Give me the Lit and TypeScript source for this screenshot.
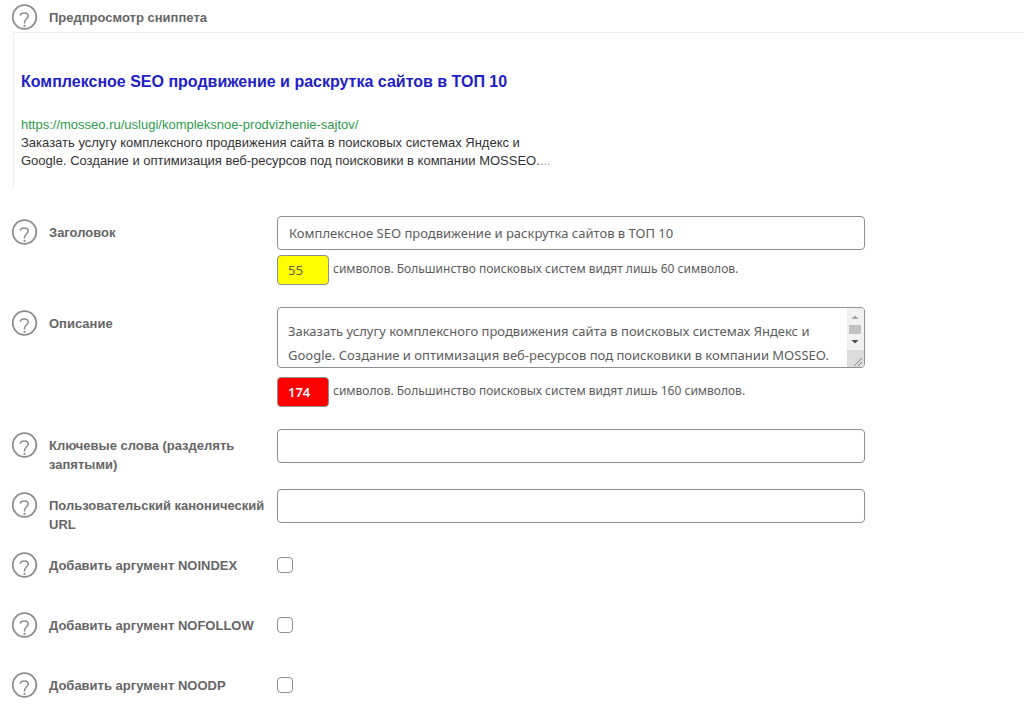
import { LitElement, html, css } from "lit";
import { customElement, property } from "lit/decorators.js";

@customElement("help-button")
class HelpButton extends LitElement {
  static styles = css`
    :host {
      display: block;
      height: 26px;
    }
    .help {
      display: block;
      width: 26px;
      height: 26px;
      padding: 0;
      border: 0;
      background: none;
      cursor: pointer;
    }
    .icon {
      display: block;
      width: 26px;
      height: 26px;
    }
  `;

  render() {
    return html`
      <button class="help" type="button" aria-label="Справка">
        <svg class="icon" viewBox="0 0 26 26" fill="none">
          <circle cx="12.500" cy="13" r="11.8" stroke="#8c8c8c" stroke-width="1.8" />
          <path
            d="M8.300 11.800C8.300 9.800 10 8.900 12.200 8.900C14.600 8.900 16.200 10.100 16.200 12.100C16.200 14.900 12.500 15.200 12.500 18.300V19.500"
            stroke="#8c8c8c"
            stroke-width="1.5"
          />
          <circle cx="12.500" cy="21.900" r="1.1" fill="#8c8c8c" />
        </svg>
      </button>
    `;
  }
}

@customElement("app-root")
class AppRoot extends LitElement {
  @property() heading = "Комплексное SEO продвижение и раскрутка сайтов в ТОП 10";
  @property() description =
    "Заказать услугу комплексного продвижения сайта в поисковых системах Яндекс и Google. Создание и оптимизация веб-ресурсов под поисковики в компании MOSSEO.";

  static styles = css`
    :host {
      display: block;
      box-sizing: border-box;
      padding: 4px 0 0 12px;
      background: #fff;
      color: #666;
      font: 13px/19px "Liberation Sans", Arial, sans-serif;
    }
    * {
      box-sizing: border-box;
    }
    .top {
      display: flex;
      align-items: center;
      gap: 11px;
    }
    .label {
      font-weight: 700;
    }
    .preview {
      margin: 2px 0 28px 1px;
      padding: 38px 7px 18px;
      border-top: 1px solid #eee;
      border-left: 1px solid #eee;
      color: #333;
      line-height: 18px;
    }
    .title {
      display: block;
      margin-bottom: 23px;
      color: #1e22c5;
      font-size: 16px;
      line-height: 22px;
      font-weight: 700;
      text-decoration: none;
    }
    .url {
      color: #2d9b4b;
      line-height: 18px;
    }
    .text {
      margin: 0;
      max-width: 536px;
    }
    .more {
      color: #999;
    }
    .row {
      display: grid;
      grid-template-columns: 26px 217px minmax(0, 588px);
      column-gap: 11px;
      align-items: start;
      min-height: 60px;
      padding-bottom: 22px;
    }
    .short {
      padding-bottom: 0;
    }
    .row help-button {
      margin-top: 3px;
    }
    .row .label {
      padding-top: 7px;
    }
    .input,
    .area,
    .count {
      border: 1px solid #8c8f94;
      border-radius: 4px;
      background: #fff;
      color: #5c5c5c;
      font: 13px/24px "Noto Sans", "Open Sans", sans-serif;
    }
    .input {
      display: block;
      width: 100%;
      height: 34px;
      padding: 0 11px;
    }
    .area {
      display: flex;
      height: 61px;
      overflow: hidden;
    }
    .textarea {
      flex: 1;
      min-width: 0;
      padding: 11px 0 0 10px;
      border: 0;
      background: none;
      color: inherit;
      font: inherit;
      resize: none;
      overflow: hidden;
      outline: none;
    }
    .scroll {
      width: 17px;
      height: 59px;
    }
    .counter {
      display: flex;
      gap: 4px;
      margin-top: 5px;
      font: 12px/28px "Noto Sans", "Open Sans", sans-serif;
      color: #5c5c5c;
    }
    .area + .counter {
      margin-top: 9px;
    }
    .count {
      width: 52px;
      height: 30px;
      padding: 0 10px;
    }
    .near {
      background: #ff0;
    }
    .over {
      background: #f00;
      color: #fff;
      font-weight: 600;
    }
    .check {
      appearance: none;
      width: 16px;
      height: 16px;
      margin: 8px 0 0;
      border: 1px solid #8c8f94;
      border-radius: 4px;
      background: #fff;
    }
    .check:checked {
      background: #2271b1;
    }
  `;

  private textRow(id: string, label: string) {
    return html`
      <div class="row short">
        <help-button></help-button>
        <label class="label" for=${id}>${label}</label>
        <input class="input" id=${id} type="text" />
      </div>
    `;
  }

  private checkRow(name: string) {
    return html`
      <div class="row short">
        <help-button></help-button>
        <label class="label" for=${name}>Добавить аргумент ${name}</label>
        <input class="check" id=${name} type="checkbox" />
      </div>
    `;
  }

  render() {
    return html`
      <div class="top">
        <help-button></help-button>
        <span class="label">Предпросмотр сниппета</span>
      </div>
      <section class="preview">
        <a class="title" href="#">${this.heading}</a>
        <div class="url">https://mosseo.ru/uslugi/kompleksnoe-prodvizhenie-sajtov/</div>
        <p class="text">${this.description}<span class="more">...</span></p>
      </section>

      <div class="row">
        <help-button></help-button>
        <label class="label" for="heading">Заголовок</label>
        <div>
          <input class="input" id="heading" type="text" .value=${this.heading} />
          <div class="counter">
            <input class="count near" id="heading-count" type="text" readonly value="55" />
            <label for="heading-count">символов. Большинство поисковых систем видят лишь 60 символов.</label>
          </div>
        </div>
      </div>

      <div class="row">
        <help-button></help-button>
        <label class="label" for="description">Описание</label>
        <div>
          <div class="area">
            <textarea class="textarea" id="description" .value=${this.description}></textarea>
            <svg class="scroll" viewBox="0 0 17 59" aria-hidden="true">
              <path d="M0 0H17V59H0Z" fill="#f1f1f1" />
              <path d="M4.500 11L8 7.500L11.500 11Z" fill="#a3a3a3" />
              <path d="M2 17H14V26H2Z" fill="#c1c1c1" />
              <path d="M4.500 32L8 35.500L11.500 32Z" fill="#505050" />
              <path d="M0 42H17V59H0Z" fill="#dcdcdc" />
              <path d="M7 58L15 50M11 58L15 54" stroke="#888" fill="none" />
            </svg>
          </div>
          <div class="counter">
            <input class="count over" id="description-count" type="text" readonly value="174" />
            <label for="description-count">символов. Большинство поисковых систем видят лишь 160 символов.</label>
          </div>
        </div>
      </div>

      ${this.textRow("keywords", "Ключевые слова (разделять запятыми)")}
      ${this.textRow("canonical", "Пользовательский канонический URL")}
      ${["NOINDEX", "NOFOLLOW", "NOODP"].map((name) => this.checkRow(name))}
    `;
  }
}
